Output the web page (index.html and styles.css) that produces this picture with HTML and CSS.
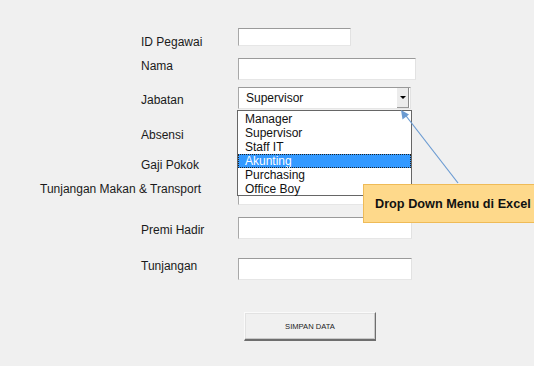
FILE: index.html
```html
<!DOCTYPE html>
<html>
<head>
<meta charset="utf-8">
<link rel="stylesheet" href="styles.css">
</head>
<body>
<div class="form">
  <div class="row r1">
    <div class="label l1">ID Pegawai</div>
    <div class="field tb f1"></div>
  </div>
  <div class="row r2">
    <div class="label l2">Nama</div>
    <div class="field tb f2"></div>
  </div>
  <div class="row r3">
    <div class="label l3">Jabatan</div>
    <div class="field combo f3">
      <span class="combo-text">Supervisor</span>
      <span class="combo-btn"><span class="tri"></span></span>
    </div>
  </div>
  <div class="row r4">
    <div class="label l4">Absensi</div>
    <div class="field tb f4"></div>
  </div>
  <div class="row r5">
    <div class="label l5">Gaji Pokok</div>
    <div class="field tb f5"></div>
  </div>
  <div class="row r6">
    <div class="label l6">Tunjangan Makan &amp; Transport</div>
    <div class="field tb f6"></div>
  </div>
  <div class="row r7">
    <div class="label l7">Premi Hadir</div>
    <div class="field tb f7"></div>
  </div>
  <div class="row r8">
    <div class="label l8">Tunjangan</div>
    <div class="field tb f8"></div>
  </div>
  <div class="btn-row">
    <div class="btn">SIMPAN DATA</div>
  </div>

  <ul class="listbox">
    <li>Manager</li>
    <li>Supervisor</li>
    <li>Staff IT</li>
    <li class="sel">Akunting</li>
    <li>Purchasing</li>
    <li>Office Boy</li>
  </ul>

  <svg class="arrow" width="534" height="366" viewBox="0 0 534 366">
    <line x1="458" y1="183" x2="403" y2="112" stroke="#6b9bd2" stroke-width="1.2"/>
    <polygon points="401,110 402.5,119.5 409,114.5" fill="#6b9bd2"/>
  </svg>

  <div class="callout">Drop Down Menu di Excel</div>
</div>
</body>
</html>
```
FILE: styles.css
```css
html, body {
  margin: 0;
  padding: 0;
}
body {
  width: 534px;
  height: 366px;
  overflow: hidden;
  background: #f0f0f0;
  font-family: "Liberation Sans", Arial, sans-serif;
  font-size: 12px;
  color: #1a1a1a;
}
.form {
  position: relative;
  width: 534px;
  height: 366px;
  padding-top: 28px;
  box-sizing: border-box;
}
.row {
  display: flex;
  align-items: flex-start;
}
.label {
  width: 238px;
  box-sizing: border-box;
  padding-left: 141px;
  line-height: 14px;
  white-space: nowrap;
}
.field {
  box-sizing: border-box;
}
.tb {
  background: #fff;
  border-top: 1px solid #9a9a9a;
  border-left: 1px solid #a8a8a8;
  border-right: 1px solid #e2e2e2;
  border-bottom: 1px solid #e6e6e6;
  height: 22px;
  width: 174px;
}
.r1 { height: 30px; }
.l1 { margin-top: 7px; }
.f1 { width: 113px; height: 18px; }
.r2 { height: 29px; }
.l2 { margin-top: 1px; }
.f2 { width: 178px; }
.r3 { height: 36px; }
.l3 { margin-top: 6px; }
.r4 { height: 32px; }
.l4 { margin-top: 5px; }
.r5 { height: 27px; }
.l5 { margin-top: 3px; }
.r6 { height: 35px; }
.l6 { padding-left: 40px; margin-top: 0; }
.f6 { margin-top: 1px; }
.r7 { height: 41px; }
.l7 { margin-top: 6px; }
.r8 { height: 54px; }
.l8 { margin-top: 1px; }

.combo {
  display: flex;
  align-items: center;
  width: 173px;
  height: 22px;
  background: #fff;
  border-top: 1px solid #9a9a9a;
  border-left: 1px solid #a8a8a8;
  border-right: 1px solid #e2e2e2;
  border-bottom: 1px solid #e6e6e6;
  padding-left: 7px;
}
.combo-text {
  flex: 1;
  color: #111;
}
.combo-btn {
  width: 11px;
  height: 19px;
  margin-right: 1px;
  background: #ececec;
  border-right: 1px solid #8a8a8a;
  border-bottom: 1px solid #9a9a9a;
  display: flex;
  align-items: center;
  justify-content: center;
}
.tri {
  width: 0;
  height: 0;
  border-left: 3px solid transparent;
  border-right: 3px solid transparent;
  border-top: 3px solid #000;
}

.btn-row {
  display: flex;
  padding-left: 244px;
}
.btn {
  width: 132px;
  height: 29px;
  box-sizing: border-box;
  background: #f0f0f0;
  border-top: 1px solid #fafafa;
  border-left: 1px solid #fafafa;
  border-right: 1px solid #6e6e6e;
  border-bottom: 2px solid #6e6e6e;
  box-shadow: inset -1px -1px 0 #c8c8c8, inset 1px 1px 0 #e2e2e2;
  font-size: 7.6px;
  color: #222;
  display: flex;
  align-items: center;
  justify-content: center;
}

.listbox {
  position: absolute;
  left: 237px;
  top: 110px;
  width: 175px;
  height: 86px;
  box-sizing: border-box;
  margin: 0;
  padding: 1px 0 0 0;
  list-style: none;
  background: #fff;
  border: 1px solid #666;
}
.listbox li {
  height: 14px;
  line-height: 14px;
  padding-left: 7px;
  color: #111;
}
.listbox li.sel {
  background: #3399ff;
  color: #fff;
  outline: 1px dotted #222;
  outline-offset: -1px;
}

.arrow {
  position: absolute;
  left: 0;
  top: 0;
}

.callout {
  position: absolute;
  left: 363px;
  top: 184px;
  width: 180px;
  height: 39px;
  box-sizing: border-box;
  background: #fed98b;
  border: 1px solid #efbb57;
  padding-left: 11px;
  display: flex;
  align-items: center;
  font-weight: bold;
  font-size: 12.7px;
  color: #111;
  white-space: nowrap;
}
```
